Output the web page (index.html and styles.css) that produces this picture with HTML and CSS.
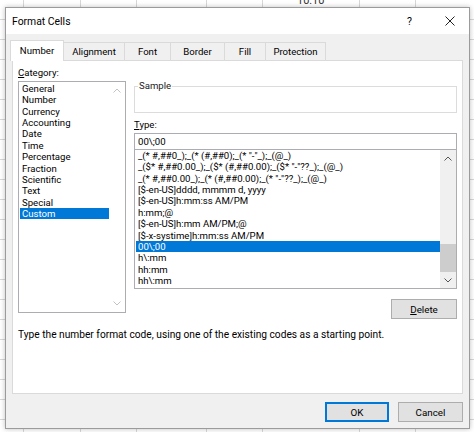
FILE: index.html
```html
<!DOCTYPE html>
<html lang="en">
<head>
    <meta charset="UTF-8">
    <title>Format Cells</title>
    <link rel="stylesheet" href="styles.css">
</head>
<body>

    <div class="sheet-top"><span>10:10</span></div>

    <div class="dialog">
        <div class="titlebar">
            <span class="title">Format Cells</span>
            <span class="help">?</span>
            <svg class="close" width="10" height="10" viewBox="0 0 10 10">
                <path d="M0.5 0.5 L9.5 9.5 M9.5 0.5 L0.5 9.5" stroke="#222" stroke-width="1" fill="none"/>
            </svg>
        </div>

        <div class="tabs">
            <div class="tab active tab-number">Number</div>
            <div class="tab tab-align">Alignment</div>
            <div class="tab tab-font">Font</div>
            <div class="tab tab-border">Border</div>
            <div class="tab tab-fill">Fill</div>
            <div class="tab tab-protect">Protection</div>
        </div>

        <div class="panel">
            <div class="cols">
                <div class="category">
                    <span class="field-label"><u>C</u>ategory:</span>
                    <div class="listbox cat-list">
                        <ul class="items">
                            <li>General</li>
                            <li>Number</li>
                            <li>Currency</li>
                            <li>Accounting</li>
                            <li>Date</li>
                            <li>Time</li>
                            <li>Percentage</li>
                            <li>Fraction</li>
                            <li>Scientific</li>
                            <li>Text</li>
                            <li>Special</li>
                            <li class="selected">Custom</li>
                        </ul>
                        <div class="scroll scroll-off">
                            <div class="arrow">
                                <svg width="8" height="5" viewBox="0 0 8 5"><path d="M0.5 4.5 L4 1 L7.5 4.5" stroke="#c2c2c2" fill="none"/></svg>
                            </div>
                            <div class="arrow">
                                <svg width="8" height="5" viewBox="0 0 8 5"><path d="M0.5 0.5 L4 4 L7.5 0.5" stroke="#c2c2c2" fill="none"/></svg>
                            </div>
                        </div>
                    </div>
                </div>

                <div class="format">
                    <fieldset class="sample">
                        <legend>Sample</legend>
                        <div class="sample-box"></div>
                    </fieldset>

                    <span class="field-label type-label"><u>T</u>ype:</span>
                    <div class="type-input">00\;00</div>

                    <div class="listbox type-list">
                        <ul class="items">
                            <li>_(* #,##0_);_(* (#,##0);_(* "-"_);_(@_)</li>
                            <li>_($* #,##0.00_);_($* (#,##0.00);_($* "-"??_);_(@_)</li>
                            <li>_(* #,##0.00_);_(* (#,##0.00);_(* "-"??_);_(@_)</li>
                            <li>[$-en-US]dddd, mmmm d, yyyy</li>
                            <li>[$-en-US]h:mm:ss AM/PM</li>
                            <li>h:mm;@</li>
                            <li>[$-en-US]h:mm AM/PM;@</li>
                            <li>[$-x-systime]h:mm:ss AM/PM</li>
                            <li class="selected">00\;00</li>
                            <li>h\:mm</li>
                            <li>hh:mm</li>
                            <li>hh\:mm</li>
                        </ul>
                        <div class="scroll">
                            <div class="arrow">
                                <svg width="8" height="5" viewBox="0 0 8 5"><path d="M0.5 4.5 L4 1 L7.5 4.5" stroke="#555" fill="none"/></svg>
                            </div>
                            <div class="track"></div>
                            <div class="thumb"></div>
                            <div class="arrow arrow-down">
                                <svg width="8" height="5" viewBox="0 0 8 5"><path d="M0.5 0.5 L4 4 L7.5 0.5" stroke="#555" fill="none"/></svg>
                            </div>
                        </div>
                    </div>

                    <div class="delete-row">
                        <button class="btn"><u>D</u>elete</button>
                    </div>
                </div>
            </div>

            <p class="hint">Type the number format code, using one of the existing codes as a starting point.</p>
        </div>

        <div class="buttons">
            <button class="btn btn-ok">OK</button>
            <button class="btn btn-cancel">Cancel</button>
        </div>
    </div>

</body>
</html>
```

FILE: styles.css
```css
body { margin: 0; width: 474px; height: 432px; overflow: hidden; font-family: Roboto, "Open Sans", sans-serif; font-size: 9.6px; color: #000; background-color: #fff;
    background-image:
        linear-gradient(to right, transparent 0 23px, #d8d8d8 23px 24px, transparent 24px 80px, #d8d8d8 80px 81px, transparent 81px 136px, #d8d8d8 136px 137px, transparent 137px 206px, #d8d8d8 206px 207px, transparent 207px 262px, #d8d8d8 262px 263px, transparent 263px 359px, #d8d8d8 359px 360px, transparent 360px 415px, #d8d8d8 415px 416px, transparent 416px),
        repeating-linear-gradient(to bottom, transparent 0 19px, #d8d8d8 19px 20px); }

.sheet-top { height: 7px; overflow: hidden; padding-left: 297px; }
.sheet-top span { display: block; font-size: 11px; line-height: 11px; margin-top: -5px; color: #333; }

.dialog { width: 463px; height: 420px; margin-left: 5px; border: 1px solid #9b9b9b; background: #f0f0f0; box-shadow: 0 0 5px rgba(0, 0, 0, 0.25); }

.titlebar { height: 26px; background: #fff; display: flex; align-items: center; padding: 0 14px 0 6px; font-size: 10.4px; }
.title { flex: 1; }
.help { margin-right: 33px; font-size: 10.5px; }
.close { display: block; }

.tabs { display: flex; align-items: flex-end; height: 20px; margin-top: 6px; padding-left: 4px; }
.tab { height: 17px; line-height: 17px; border: 1px solid #dadada; border-bottom: 0; margin-left: -1px; text-align: center; background: #f0f0f0; box-sizing: content-box; }
.tab:first-child { margin-left: 0; }
.tab.active { height: 20px; line-height: 20px; background: #fff; margin-bottom: -1px; position: relative; z-index: 1; }
.tab-number { width: 52px; }
.tab-align { width: 60px; }
.tab-font { width: 45px; }
.tab-border { width: 53px; }
.tab-fill { width: 40px; }
.tab-protect { width: 59px; }

.panel { margin: 0 6px; height: 332px; border: 1px solid #dadada; background: #fff; padding: 0 5px; }
.cols { display: grid; grid-template-columns: 108px 323px; column-gap: 8px; align-items: start; }

.field-label { display: block; line-height: 12px; }
.category .field-label { padding-top: 6px; margin-bottom: 2px; }

.listbox { display: flex; border: 1px solid #abadb3; background: #fff; }
.items { list-style: none; margin: 0; padding: 1px 0 0 1px; flex: 1; line-height: 11.36px; white-space: nowrap; overflow: hidden; }
.items li { padding-left: 2px; }
.items li.selected { background: #0078d7; color: #fff; }

.cat-list { height: 230px; }
.scroll { width: 16px; display: flex; flex-direction: column; }
.scroll-off { justify-content: space-between; }
.arrow { height: 17px; display: flex; align-items: center; justify-content: center; }
.arrow svg { display: block; }

.sample { margin: 19px 0 0; padding: 0 3px; border: 1px solid #dcdcdc; }
.sample legend { padding: 0 1px; margin-left: 0; line-height: 12px; color: #222; }
.sample-box { height: 20px; }

.type-label { margin-top: 6px; }
.type-input { margin-top: 2px; height: 15px; line-height: 15px; padding-left: 3px; border: 1px solid #abadb3; border-bottom: 0; }

.type-list { height: 138px; }
.type-list .items { padding-top: 0; }
.type-list .scroll { background: #f0f0f0; width: 16px; }
.track { flex: 1; }
.thumb { height: 28px; background: #cdcdcd; }
.arrow-down { height: 16px; }

.delete-row { display: flex; justify-content: flex-end; margin-top: 10px; }

.btn { font-family: inherit; font-size: 9.8px; color: #000; background: #e1e1e1; border: 1px solid #adadad; height: 20px; padding: 0; margin: 0; }
.delete-row .btn { width: 66px; }

.hint { margin: 10px 0 0; line-height: 12px; font-size: 10.2px; }

.buttons { display: flex; justify-content: flex-end; gap: 9px; margin-top: 8px; padding-right: 6px; }
.btn-ok { width: 64px; border: 2px solid #0078d7; }
.btn-cancel { width: 65px; }
```
